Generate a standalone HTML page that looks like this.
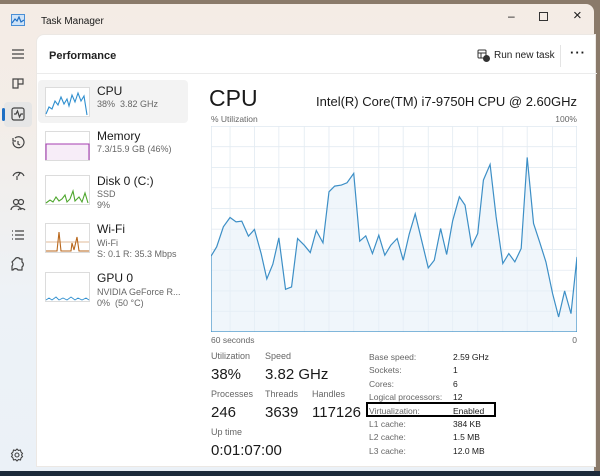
<!DOCTYPE html>
<html><head><meta charset="utf-8"><style>
*{margin:0;padding:0;box-sizing:border-box}
body{width:600px;height:476px;overflow:hidden;position:relative;font-family:"Liberation Sans",sans-serif;background:#8a7a6a}
.abs{position:absolute}
#win{left:0;top:4px;width:594px;height:467px;background:linear-gradient(#f4ece5 0,#f3ede8 120px,#edf2f7 300px,#ebf1f7 467px);border-radius:0 8px 0 0;overflow:hidden}
#panel{left:36px;top:34px;width:560px;height:433px;background:#fff;border-radius:8px 0 0 0;border:1px solid #ece8e4}
.t{position:absolute;white-space:nowrap;color:#1a1a1a}
.g{color:#666}
.ic{position:absolute;color:#444}
</style></head><body>
<div class="abs" style="left:0;top:471px;width:600px;height:5px;background:#1c2a3a"></div>
<div id="win" class="abs">
 <svg class="abs" style="left:11px;top:10px" width="14" height="12" viewBox="0 0 14 12"><rect x="0.5" y="0.5" width="13" height="11" fill="#cfe3f7" stroke="#4a8fd6"/><path d="M1 9 L4 5 L6 7 L8 3 L10 8 L13 6" fill="none" stroke="#1f6fc4" stroke-width="1.2"/></svg>
 <div class="t" style="left:41px;top:12px;font-size:10px">Task Manager</div>
 <div class="t" style="left:508px;top:5px;font-size:12px">–</div>
 <div class="abs" style="left:539px;top:8px;width:9px;height:9px;border:1px solid #333"></div>
 <div class="t" style="left:573px;top:3px;font-size:15px">×</div>
 <!-- sidebar icons -->
 <div class="abs" style="left:4px;top:98px;width:28px;height:25px;background:#e6e6e6;border-radius:4px"></div>
 <div class="abs" style="left:2px;top:104px;width:3px;height:13px;background:#1e6fc4;border-radius:2px"></div>
 <svg class="abs" style="left:8px;top:40px" width="20" height="240" viewBox="0 0 20 240" fill="none" stroke="#444" stroke-width="1.2">
  <path d="M4 6h12M4 10h12M4 14h12"/>
  <path d="M5 35h5v9h-5zM10 35h5v5h-5zM5 44h0"/>
  <rect x="4" y="64" width="12" height="12" rx="2"/><path d="M6 70h2l1.5-3 2 6 1.5-3h2"/>
  <path d="M5 98a5.5 5.5 0 1 0 2-4M5 94v3h3M10 97v3l2 1"/>
  <path d="M5 132a6 6 0 0 1 11 0M10 132l2-3M9 132v4"/>
  <circle cx="8" cy="158" r="2.5"/><circle cx="13" cy="158" r="2.5"/><path d="M3 166a5 4 0 0 1 10 0M10 166a4 3 0 0 1 7 0"/>
  <path d="M4 187h1M4 191h1M4 195h1M7 187h9M7 191h9M7 195h9"/>
  <path d="M7 215a3 3 0 0 1 5 0h2v3a3 3 0 0 1 0 5v3h-4a3 3 0 0 0-5 0H4v-4a3 3 0 0 0 0-4z"/>
 </svg>
 <svg class="abs" style="left:10px;top:444px" width="14" height="14" viewBox="0 0 14 14" fill="none" stroke="#444" stroke-width="1.1"><circle cx="7" cy="7" r="2"/><path d="M7 1l1.5 1.5 2-.5.5 2 1.5 1.5-1 1.5 1 1.5-1.5 1.5-.5 2-2-.5L7 13l-1.5-1.5-2 .5-.5-2L1.5 8.5 2.5 7l-1-1.5L3 4l.5-2 2 .5z"/></svg>
</div>
<div id="panel" class="abs">
 <div class="t" style="left:12px;top:15px;font-size:11px;font-weight:bold;color:#222">Performance</div>
 <svg class="abs" style="left:440px;top:14px" width="13" height="13" viewBox="0 0 13 13" fill="none" stroke="#333" stroke-width="1"><rect x="1" y="1" width="8" height="8" rx="1"/><path d="M1 4h8M4 4v5"/><circle cx="9.5" cy="9.5" r="3" fill="#333"/></svg>
 <div class="t" style="left:457px;top:15px;font-size:10px;color:#222">Run new task</div>
 <div class="abs" style="left:523px;top:10px;width:1px;height:22px;background:#e4e4e4"></div>
 <div class="t" style="left:533px;top:10px;font-size:13px;font-weight:bold;letter-spacing:1px">···</div>
 <div class="abs" style="left:0;top:38px;width:560px;height:1px;background:#ebebeb"></div>
</div>
<!-- left list -->
<div class="abs" style="left:38px;top:80px;width:150px;height:43px;background:#f3f3f3;border-radius:4px"></div>
<svg class="abs" style="left:45px;top:87px" width="45" height="218" viewBox="0 0 45 218" fill="none">
 <rect x="0.5" y="0.5" width="44" height="29" fill="#fff" stroke="#dcdcdc"/>
 <path d="M1 27 L4 20 L7 22 L10 14 L13 18 L16 10 L19 17 L22 12 L24 19 L27 8 L30 15 L33 6 L36 14 L39 9 L42 28" stroke="#2f8fcf" stroke-width="1.1"/>
 <rect x="0.5" y="44.5" width="44" height="29" fill="#fff" stroke="#dcdcdc"/>
 <path d="M1 73 V57 H44 V73" fill="#f7edf8" stroke="#a43db0" stroke-width="1.1"/>
 <rect x="0.5" y="88.5" width="44" height="29" fill="#fff" stroke="#dcdcdc"/>
 <path d="M1 116 L5 113 L8 115 L11 110 L14 114 L17 112 L20 108 L22 115 L25 112 L28 104 L30 114 L34 110 L37 115 L40 106 L43 116" stroke="#4ea62d" stroke-width="1.1"/>
 <rect x="0.5" y="136.5" width="44" height="29" fill="#fff" stroke="#dcdcdc"/>
 <path d="M1 155 H44" stroke="#d9a477" stroke-width="0.8"/>
 <path d="M1 164 L12 164 L14 145 L16 164 L26 164 L27 156 L29 163 L32 150 L34 164 L44 164" stroke="#b9671c" stroke-width="1.1"/>
 <rect x="0.5" y="185.5" width="44" height="29" fill="#fff" stroke="#dcdcdc"/>
 <path d="M1 213 L4 211 L7 213 L11 210 L14 213 L18 211 L22 213 L26 210 L30 213 L33 211 L37 213 L41 211 L44 213" stroke="#2f8fcf" stroke-width="0.9"/>
</svg>
<div class="t" style="left:97px;top:84px;font-size:12px">CPU</div>
<div class="t g" style="left:97px;top:99px;font-size:9px">38%&nbsp; 3.82 GHz</div>
<div class="t" style="left:97px;top:129px;font-size:12px">Memory</div>
<div class="t g" style="left:97px;top:144px;font-size:9px">7.3/15.9 GB (46%)</div>
<div class="t" style="left:97px;top:174px;font-size:12px">Disk 0 (C:)</div>
<div class="t g" style="left:97px;top:189px;font-size:9px">SSD</div>
<div class="t g" style="left:97px;top:200px;font-size:9px">9%</div>
<div class="t" style="left:97px;top:222px;font-size:12px">Wi-Fi</div>
<div class="t g" style="left:97px;top:238px;font-size:9px">Wi-Fi</div>
<div class="t g" style="left:97px;top:249px;font-size:9px">S: 0.1 R: 35.3 Mbps</div>
<div class="t" style="left:97px;top:271px;font-size:12px">GPU 0</div>
<div class="t g" style="left:97px;top:287px;font-size:9px">NVIDIA GeForce R...</div>
<div class="t g" style="left:97px;top:298px;font-size:9px">0%&nbsp; (50 °C)</div>
<!-- main -->
<div class="t" style="left:209px;top:85px;font-size:23px">CPU</div>
<div class="t" style="right:23px;top:94px;font-size:13px">Intel(R) Core(TM) i7-9750H CPU @ 2.60GHz</div>
<div class="t g" style="left:211px;top:114px;font-size:8.5px">% Utilization</div>
<div class="t g" style="right:23px;top:114px;font-size:8.5px">100%</div>
<svg class="abs" style="left:211px;top:126px" width="366" height="206" viewBox="35 18 1095 617" preserveAspectRatio="none">
 <rect x="35" y="18" width="1095" height="617" fill="#fff" stroke="#cfdde9" stroke-width="3"/>
 <g stroke="#e3ebf2" stroke-width="2.5">
 <path d="M92 18V635M165 18V635M238 18V635M314 18V635M388 18V635M462 18V635M537 18V635M610 18V635M685 18V635M758 18V635M833 18V635M908 18V635M981 18V635M1057 18V635"/>
 <path d="M35 80H1130M35 142H1130M35 203H1130M35 265H1130M35 327H1130M35 388H1130M35 450H1130M35 512H1130M35 573H1130"/>
 </g>
 <path d="M35 635 L35 408 L52 380 L72 320 L92 292 L110 305 L127 303 L147 348 L165 328 L185 400 L202 476 L220 432 L238 353 L258 507 L276 500 L294 355 L314 375 L332 397 L350 331 L370 368 L388 215 L405 198 L425 195 L442 188 L462 160 L480 363 L498 347 L518 400 L537 345 L555 405 L573 375 L592 355 L610 420 L628 342 L646 281 L665 360 L685 443 L703 420 L722 325 L740 403 L758 302 L778 230 L795 255 L815 378 L833 340 L850 180 L870 133 L888 290 L908 430 L926 400 L944 425 L963 385 L981 112 L1000 310 L1018 365 L1037 425 L1057 520 L1075 590 L1093 512 L1112 580 L1130 410 L1130 635 Z" fill="#e6f0f8" fill-opacity="0.6" stroke="#3d8fc6" stroke-width="1.2" vector-effect="non-scaling-stroke"/>
</svg>
<div class="t g" style="left:211px;top:335px;font-size:8.5px">60 seconds</div>
<div class="t g" style="right:23px;top:335px;font-size:8.5px">0</div>
<div class="t g" style="left:211px;top:351px;font-size:9px">Utilization</div>
<div class="t g" style="left:265px;top:351px;font-size:9px">Speed</div>
<div class="t" style="left:211px;top:366px;font-size:15px">38%</div>
<div class="t" style="left:265px;top:366px;font-size:15px">3.82 GHz</div>
<div class="t g" style="left:211px;top:389px;font-size:9px">Processes</div>
<div class="t g" style="left:265px;top:389px;font-size:9px">Threads</div>
<div class="t g" style="left:312px;top:389px;font-size:9px">Handles</div>
<div class="t" style="left:211px;top:404px;font-size:15px">246</div>
<div class="t" style="left:265px;top:404px;font-size:15px">3639</div>
<div class="t" style="left:312px;top:404px;font-size:15px">117126</div>
<div class="t g" style="left:211px;top:427px;font-size:9px">Up time</div>
<div class="t" style="left:211px;top:442px;font-size:15px">0:01:07:00</div>
<div class="abs" style="left:366px;top:402px;width:130px;height:15px;border:2px solid #000"></div>
<div style="position:absolute;left:369px;top:351px;font-size:8.5px;line-height:13.4px;color:#666">Base speed:<br>Sockets:<br>Cores:<br>Logical processors:<br>Virtualization:<br>L1 cache:<br>L2 cache:<br>L3 cache:</div>
<div style="position:absolute;left:453px;top:351px;font-size:8.5px;line-height:13.4px;color:#1a1a1a">2.59 GHz<br>1<br>6<br>12<br>Enabled<br>384 KB<br>1.5 MB<br>12.0 MB</div>
</body></html>
